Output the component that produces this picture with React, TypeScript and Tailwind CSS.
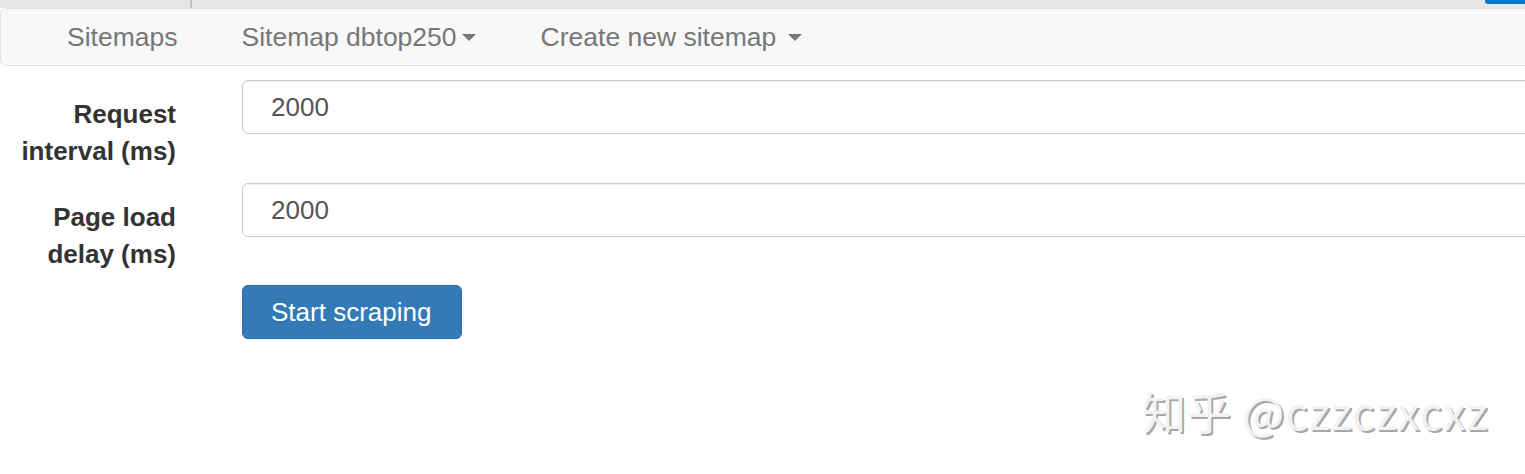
import React from "react";

function Caret() {
  return (
    <svg width="14" height="8" viewBox="0 0 14 8" className="inline-block">
      <path d="M0 0 L14 0 L7 7 Z" fill="#777" />
    </svg>
  );
}

export default function App() {
  return (
    <div className="relative w-[1525px] h-[474px] overflow-hidden bg-white font-['Liberation_Sans',Arial,sans-serif]">
      <div className="flex h-[8px] bg-[#e6e6e6]">
        <div className="w-[190px]" />
        <div className="w-[2px] bg-[#c4c4c4]" />
        <div className="flex-1" />
        <div className="w-[40px] h-[4px] rounded-bl-[3px] bg-[#0078d4]" />
      </div>
      <div className="flex h-[58px] w-[1560px] items-center rounded-l-[6px] border border-[#e3e3e3] bg-[#f8f8f8] pt-[2px] text-[26.5px] text-[#777]">
        <span className="ml-[66px]">Sitemaps</span>
        <span className="ml-[64px] flex items-center">
          Sitemap dbtop250<span className="ml-[5px] flex"><Caret /></span>
        </span>
        <span className="ml-[65px] flex items-center">
          Create new sitemap<span className="ml-[12px] flex"><Caret /></span>
        </span>
      </div>
      <div className="mt-[14px] grid grid-cols-[176px_1400px] gap-x-[66px] text-[26px] leading-[37px]">
        <label className="pt-[16px] text-right font-bold text-[#333]">
          Request
          <br />
          interval (ms)
        </label>
        <div className="flex h-[54px] items-center rounded-[6px] border border-[#ccc] pl-[28px] text-[#555] shadow-[inset_0_1px_1px_rgba(0,0,0,0.075)]">
          2000
        </div>
        <div className="col-span-2 h-[13px]" />
        <label className="pt-[16px] text-right font-bold text-[#333]">
          Page load
          <br />
          delay (ms)
        </label>
        <div className="flex h-[54px] items-center rounded-[6px] border border-[#ccc] pl-[28px] text-[#555] shadow-[inset_0_1px_1px_rgba(0,0,0,0.075)]">
          2000
        </div>
        <div className="col-span-2 h-[12px]" />
        <div />
        <div>
          <button className="flex h-[54px] w-[220px] items-center rounded-[6px] border border-[#2e6da4] bg-[#337ab7] pl-[28px] text-white">
            Start scraping
          </button>
        </div>
      </div>
      <div className="absolute left-[1142px] top-[384px] text-[44px] leading-[54px] tracking-[1px] text-[#f2f2f2] font-['Noto_Sans_CJK_SC',sans-serif] [text-shadow:2px_2px_0_#a8a8a8]">
        知乎 @czzczxcxz
      </div>
    </div>
  );
}
